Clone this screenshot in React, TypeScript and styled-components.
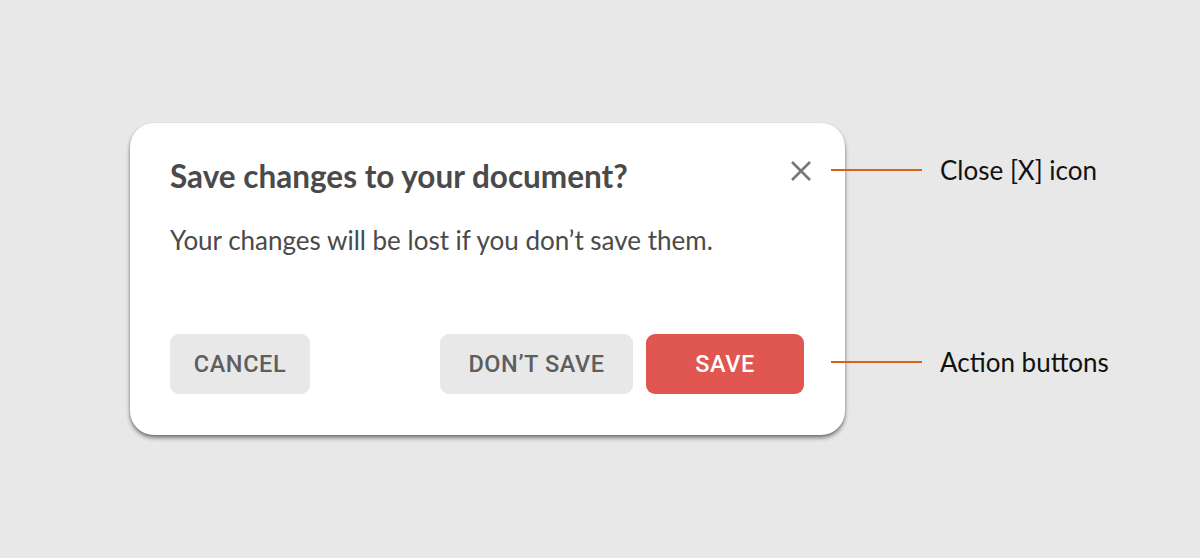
import styled, { createGlobalStyle } from "styled-components"

const Global = createGlobalStyle`
body {
  margin: 0;
  background: #e8e8e8;
  font-family: Lato, "Noto Sans", sans-serif;
}
`

const Page = styled.main`
display: flex;
align-items: flex-start;
width: 1200px;
height: 558px;
box-sizing: border-box;
padding: 123px 0 0 130px;
`

const Dialog = styled.section`
width: 715px;
height: 312px;
box-sizing: border-box;
padding: 33px 41px 41px 40px;
background: #fff;
border-radius: 24px;
box-shadow: 0 3px 4px rgba(0, 0, 0, 0.45), 0 1px 2px rgba(0, 0, 0, 0.15);
display: flex;
flex-direction: column;
position: relative;
z-index: 0;
`

const Header = styled.div`
display: flex;
justify-content: space-between;
align-items: flex-start;
`

const Titulo = styled.h2`
margin: 0;
font-family: Lato, sans-serif;
font-weight: 700;
font-size: 31.5px;
line-height: 40px;
color: #4a4a4a;
`

const Fechar = styled.button`
border: 0;
background: none;
padding: 0;
margin: 4px -8px 0 0;
width: 22px;
height: 22px;
display: flex;
align-items: center;
justify-content: center;
color: #787878;
`

const Texto = styled.p`
margin: 28px 0 0;
font-family: Lato, sans-serif;
font-size: 26px;
line-height: 32px;
color: #4a4a4a;
`

const Acoes = styled.div`
margin-top: auto;
display: flex;
gap: 13px;
`

const Botao = styled.button<{ $tipo?: "primario" | "neutro"; $largura: number }>`
width: ${(p) => p.$largura}px;
height: 60px;
border: 0;
border-radius: 9px;
font-family: Roboto, sans-serif;
font-weight: 500;
font-size: 23.5px;
letter-spacing: 0.6px;
background: ${(p) => (p.$tipo === "primario" ? "#e05651" : "#e8e8e8")};
color: ${(p) => (p.$tipo === "primario" ? "#fff" : "#5e5e5e")};
&:first-child {
  margin-right: auto;
}
`

const Notas = styled.aside`
margin-left: -14px;
padding-top: 32px;
display: flex;
flex-direction: column;
gap: 162px;
position: relative;
z-index: 1;
`

const Nota = styled.div`
display: flex;
align-items: center;
gap: 18px;
height: 30px;
`

const Linha = styled.span`
width: 91px;
height: 2px;
background: #d8621a;
`

const Rotulo = styled.span`
font-family: Lato, sans-serif;
font-size: 26px;
color: #111;
`

export default function App() {
  return (
    <Page>
      <Global />
      <Dialog>
        <Header>
          <Titulo>Save changes to your document?</Titulo>
          <Fechar aria-label="Close">
            <svg width="22" height="22" viewBox="0 0 22 22">
              <path d="M2 2L20 20M20 2L2 20" stroke="currentColor" strokeWidth="2.6" />
            </svg>
          </Fechar>
        </Header>
        <Texto>Your changes will be lost if you don’t save them.</Texto>
        <Acoes>
          <Botao $largura={140}>CANCEL</Botao>
          <Botao $largura={193}>DON’T SAVE</Botao>
          <Botao $largura={158} $tipo="primario">SAVE</Botao>
        </Acoes>
      </Dialog>
      <Notas>
        <Nota>
          <Linha />
          <Rotulo>Close [X] icon</Rotulo>
        </Nota>
        <Nota>
          <Linha />
          <Rotulo>Action buttons</Rotulo>
        </Nota>
      </Notas>
    </Page>
  )
}
